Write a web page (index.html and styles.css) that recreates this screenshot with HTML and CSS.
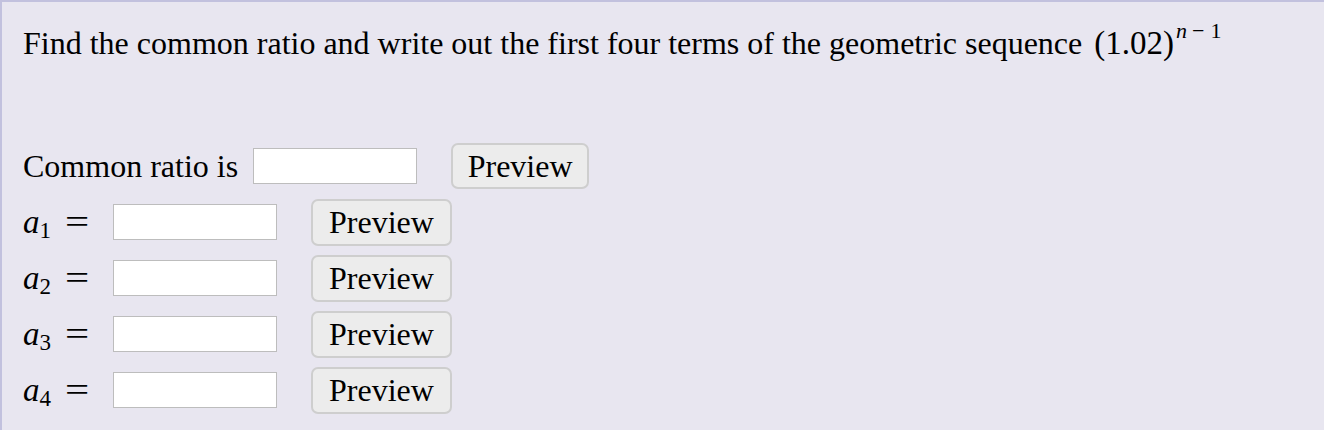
FILE: index.html
```html
<!DOCTYPE html>
<html lang="en">
<head>
  <meta charset="UTF-8">
  <meta name="viewport" content="width=device-width, initial-scale=1.0">
  <title>Geometric sequence</title>
  <link rel="stylesheet" href="styles.css">
</head>
<body>
  <div class="problem">
    <p class="question">
      Find the common ratio and write out the first four terms of the geometric sequence
      <span class="math">(1.02)<sup class="power"><i>n</i><span class="minus">−</span>1</sup></span>
    </p>
    <div class="row">
      <span class="label">Common ratio is</span>
      <input class="answer answer-ratio" type="text">
      <button class="preview" type="button">Preview</button>
    </div>
    <div class="row">
      <span class="term"><i>a</i><sub>1</sub></span>
      <span class="eq">=</span>
      <input class="answer" type="text">
      <button class="preview" type="button">Preview</button>
    </div>
    <div class="row">
      <span class="term"><i>a</i><sub>2</sub></span>
      <span class="eq">=</span>
      <input class="answer" type="text">
      <button class="preview" type="button">Preview</button>
    </div>
    <div class="row">
      <span class="term"><i>a</i><sub>3</sub></span>
      <span class="eq">=</span>
      <input class="answer" type="text">
      <button class="preview" type="button">Preview</button>
    </div>
    <div class="row">
      <span class="term"><i>a</i><sub>4</sub></span>
      <span class="eq">=</span>
      <input class="answer" type="text">
      <button class="preview" type="button">Preview</button>
    </div>
  </div>
</body>
</html>
```

FILE: styles.css
```css
* {
  box-sizing: border-box;
}
body {
  margin: 0;
  font-family: "Liberation Serif", "Times New Roman", serif;
  font-size: 32px;
  color: #000;
}
.problem {
  min-height: 100vh;
  background: #e8e6f0;
  border-top: 2px solid #c2c1de;
  border-left: 2px solid #c2c1de;
  padding: 21px 22px 0 21px;
}
.question {
  margin: 0 0 75px;
  line-height: 40px;
}
.math {
  font-size: 33px;
  margin-left: 4px;
}
.power {
  font-size: 22px;
  line-height: 0;
  vertical-align: 16px;
  margin-left: 2px;
}
.minus {
  margin: 0 6px 0 5px;
}
.row {
  display: flex;
  align-items: center;
  height: 56px;
}
.label {
  line-height: 36px;
  margin-right: 15px;
}
.term {
  width: 42px;
  font-size: 33px;
  line-height: 36px;
}
.term sub {
  font-size: 23px;
  line-height: 0;
  vertical-align: -5px;
}
.eq {
  width: 24px;
  margin-right: 24px;
  font-size: 33px;
  line-height: 36px;
  text-align: center;
  transform: scaleX(1.3);
}
.answer {
  width: 164px;
  height: 36px;
  margin: 0;
  border: 1px solid #bdbdbd;
  background: #fff;
  font: inherit;
}
.preview {
  height: 47px;
  width: 141px;
  margin: 0 0 0 34px;
  padding: 0;
  font-family: inherit;
  font-size: 32px;
  color: #000;
  background: #ececec;
  border: 2px solid #cecece;
  border-radius: 7px;
}
.answer-ratio + .preview {
  width: 138px;
  height: 46px;
}
```
